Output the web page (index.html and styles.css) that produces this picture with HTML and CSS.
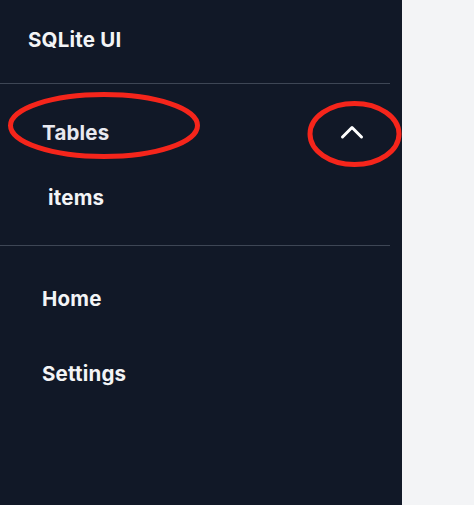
FILE: index.html
```html
<!DOCTYPE html>
<html lang="en">
<head>
<meta charset="utf-8">
<title>SQLite UI</title>
<link rel="stylesheet" href="styles.css">
</head>
<body>
<div class="app">
  <aside class="sidebar">
    <div class="brand">SQLite UI</div>
    <hr class="divider">
    <div class="group">
      <div class="group-head">
        <span class="group-title">Tables</span>
        <svg class="chevron" width="24" height="16" viewBox="0 0 24 16"><polyline points="2.5,12 12,2.5 21.5,12" fill="none" stroke="#ffffff" stroke-width="3" stroke-linecap="round" stroke-linejoin="round"/></svg>
      </div>
      <div class="table-item">items</div>
    </div>
    <hr class="divider">
    <nav class="nav">
      <div class="nav-item">Home</div>
      <div class="nav-item settings">Settings</div>
    </nav>
  </aside>
  <main class="main"></main>
</div>
<svg class="annotations" width="474" height="505" viewBox="0 0 474 505">
  <ellipse cx="104" cy="125.5" rx="93.5" ry="31" fill="none" stroke="#f5251b" stroke-width="5"/>
  <ellipse cx="354.5" cy="134" rx="44.5" ry="30.5" fill="none" stroke="#f5251b" stroke-width="5"/>
</svg>
</body>
</html>
```
FILE: styles.css
```css
html, body {
  margin: 0;
  padding: 0;
  height: 100%;
}
body {
  font-family: Inter, "Noto Sans", "Liberation Sans", sans-serif;
  background: #f3f4f6;
  position: relative;
  overflow: hidden;
}
.app {
  display: flex;
  height: 505px;
}
.sidebar {
  width: 402px;
  flex: 0 0 402px;
  background: #111827;
  color: #f3f4f6;
  font-size: 20.5px;
  font-weight: 700;
  line-height: 24px;
  letter-spacing: 0.2px;
}
.main {
  flex: 1;
  background: #f3f4f6;
}
.brand {
  padding: 28px 0 31px 28px;
}
.divider {
  margin: 0 12px 0 0;
  border: 0;
  height: 1px;
  background: #3e4655;
}
.group {
  padding: 37px 0 35px 0;
}
.group-head {
  display: flex;
  align-items: center;
  justify-content: space-between;
  padding: 0 38px 0 42px;
}
.group-title {
  color: #e8e9f0;
}
.chevron {
  display: block;
}
.table-item {
  padding: 41px 0 0 48px;
}
.nav {
  display: flex;
  flex-direction: column;
  gap: 51px;
  padding: 41px 0 0 42px;
}
.annotations {
  position: absolute;
  left: 0;
  top: 0;
  pointer-events: none;
}
```
